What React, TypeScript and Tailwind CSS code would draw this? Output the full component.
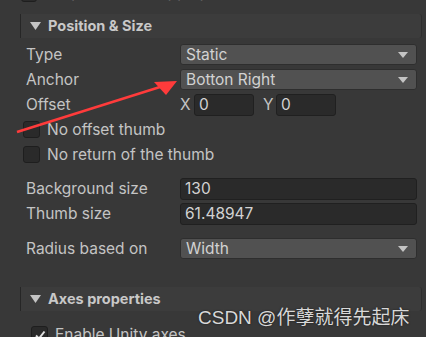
import React from "react";

const FONT = { fontFamily: "Inter, 'Noto Sans', sans-serif" };

function Caret() {
  return (
    <svg width="11" height="8" viewBox="0 0 11 8" className="shrink-0">
      <path d="M0 0 H11 L5.5 8 Z" fill="#c4c4c4" />
    </svg>
  );
}

function Foldout({ title }: { title: string }) {
  return (
    <div className="ml-[20px] mr-[4px] h-[24px] flex items-center gap-[7px] pl-[9px] bg-[#3c3c3c] border-l border-[#262626] rounded-r-[3px] border-r border-r-[#2e2e2e]">
      <Caret />
      <span className="text-[14.5px] font-bold text-[#c8c8c8]">{title}</span>
    </div>
  );
}

function Dropdown({ value }: { value: string }) {
  return (
    <div className="w-[237px] h-[21px] rounded-[3px] bg-[#515151] border border-[#2e2e2e] flex items-center pl-[5px] pr-[8px]">
      <span className="flex-1 text-[15.5px] text-[#d2d2d2] leading-none">{value}</span>
      <svg width="10" height="6" viewBox="0 0 10 6">
        <path d="M0 0 H10 L5 6 Z" fill="#c4c4c4" />
      </svg>
    </div>
  );
}

function Input({ value, className }: { value: string; className: string }) {
  return (
    <div className={`h-[22px] rounded-[3px] bg-[#2a2a2a] border border-[#202020] flex items-center pl-[4px] text-[15.5px] text-[#d2d2d2] ${className}`}>
      {value}
    </div>
  );
}

function Row({ label, children }: { label: string; children: React.ReactNode }) {
  return (
    <div className="flex items-center h-[25px]">
      <span className="w-[180px] pl-[26px] text-[15.5px] text-[#c4c4c4] shrink-0">{label}</span>
      {children}
    </div>
  );
}

function Check({ label, checked, indent }: { label: string; checked?: boolean; indent?: boolean }) {
  return (
    <div className={`flex items-center h-[25px] gap-[7px] ${indent ? "pl-[31px]" : "pl-[23px]"}`}>
      <div className="w-[17px] h-[17px] rounded-[3px] bg-[#2a2a2a] border border-[#1e1e1e] flex items-center justify-center">
        {checked && (
          <svg width="12" height="12" viewBox="0 0 12 12">
            <path d="M2 6.5 L5 9.5 L10.5 2.5" stroke="#e0e0e0" strokeWidth="2" fill="none" />
          </svg>
        )}
      </div>
      <span className="text-[15.5px] text-[#c4c4c4]">{label}</span>
    </div>
  );
}

export default function App() {
  return (
    <div className="relative w-[426px] h-[337px] overflow-hidden bg-[#383838]" style={FONT}>
      {/* cut-off row above */}
      <div className="flex items-center h-[16px] mt-[-14px] pl-[21px] gap-[9px]">
        <div className="w-[16px] h-[16px] rounded-[3px] bg-[#2a2a2a] border border-[#1e1e1e]" />
        <span className="text-[15.5px] text-[#c4c4c4] mt-[-4px]">Single touch dragging</span>
      </div>

      <div className="mt-[12px]">
        <Foldout title="Position & Size" />
      </div>

      <div className="mt-[4px] flex flex-col">
        <Row label="Type"><Dropdown value="Static" /></Row>
        <Row label="Anchor"><Dropdown value="Botton Right" /></Row>
        <Row label="Offset">
          <span className="text-[15.5px] text-[#c4c4c4] w-[14px]">X</span>
          <Input value="0" className="w-[60px]" />
          <span className="text-[15.5px] text-[#c4c4c4] w-[13px] ml-[9px]">Y</span>
          <Input value="0" className="w-[60px]" />
        </Row>
        <Check label="No offset thumb" />
        <Check label="No return of the thumb" />
      </div>

      <div className="mt-[9px] flex flex-col">
        <Row label="Background size"><Input value="130" className="w-[237px]" /></Row>
        <Row label="Thumb size"><Input value="61.48947" className="w-[237px]" /></Row>
      </div>

      <div className="mt-[10px]">
        <Row label="Radius based on"><Dropdown value="Width" /></Row>
      </div>

      <div className="mt-[26px]">
        <Foldout title="Axes properties" />
      </div>
      <div className="mt-[11px]">
        <Check label="Enable Unity axes" checked indent />
      </div>

      {/* annotation arrow */}
      <svg className="absolute left-0 top-0 pointer-events-none" width="426" height="337">
        <line x1="17" y1="132" x2="160" y2="87" stroke="#ff3b3b" strokeWidth="2.5" />
        <path d="M177 81 L154 82 L166 95 Z" fill="#ff3b3b" />
      </svg>

      {/* watermark */}
      <div
        className="absolute left-[198px] top-[304px] text-[19px] text-[#d8d8d8] whitespace-nowrap"
        style={{ fontFamily: "'Liberation Sans', 'Noto Sans CJK SC', sans-serif", textShadow: "0 0 2px rgba(0,0,0,0.6)" }}
      >
        CSDN @作孽就得先起床
      </div>
    </div>
  );
}
